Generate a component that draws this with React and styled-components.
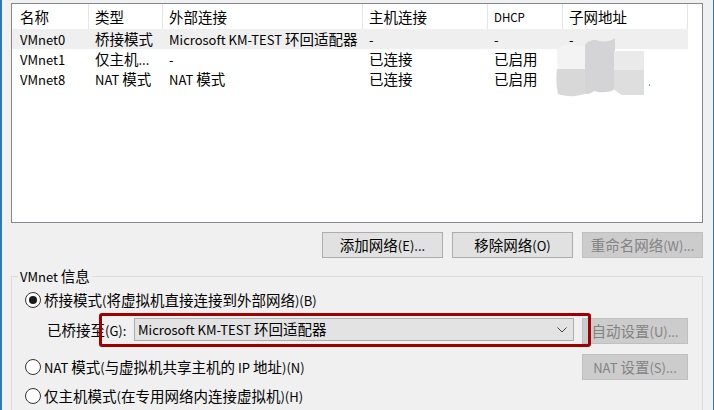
import styled, { createGlobalStyle } from "styled-components";

const GlobalStyle = createGlobalStyle`
  html, body {
    margin: 0;
    padding: 0;
    background: #f0f0f0;
  }
  body {
    font-family: "Noto Sans CJK SC", "Noto Sans", sans-serif;
  }
`;

// Latin runs are set smaller than the CJK glyphs, like Segoe UI next to YaHei
const Latin = styled.span`
  font-size: ${props => props.$size || 13}px;
`;

const T = ({ children, size }) => {
  const parts = String(children).split(/([\x20-\x7E]+)/);
  return parts.map((p, i) =>
    i % 2 === 1 ? <Latin key={i} $size={size}>{p}</Latin> : p
  );
};

const Window = styled.div`
  width: 714px;
  height: 410px;
  box-sizing: border-box;
  border-left: 2px solid #2b7bb9;
  border-right: 1px solid #2b7bb9;
  padding: 3px 10px 0 9px;
  background: #f0f0f0;
  overflow: hidden;
  font-size: 14.5px;
  color: #000;
`;

const ListBox = styled.div`
  position: relative;
  height: 220px;
  box-sizing: border-box;
  border: 1px solid #828790;
  background: #fff;
`;

const Row = styled.div`
  display: grid;
  grid-template-columns: 77px 74px 200px 125px 75px 125px;
  width: 676px;
  height: ${props => props.$header ? "25px" : "20px"};
  background: ${props => props.$selected ? "#efefef" : "transparent"};
`;

const Cell = styled.div`
  display: flex;
  align-items: center;
  padding-left: ${props => props.$first ? "8px" : "6px"};
  border-right: ${props => props.$header ? "1px solid #e5e5e5" : "none"};
  white-space: nowrap;
  overflow: hidden;
  line-height: 18px;
`;

const Blob = styled.svg`
  position: absolute;
  left: 544px;
  top: 33px;
`;

const ButtonBar = styled.div`
  display: flex;
  justify-content: flex-end;
  gap: 9px;
  margin-top: 9px;
`;

const Button = styled.button`
  width: ${props => props.$w}px;
  height: 26px;
  box-sizing: border-box;
  padding: 0;
  border: 1px solid ${props => props.disabled ? "#bfbfbf" : "#adadad"};
  background: ${props => props.disabled ? "#cccccc" : "#e1e1e1"};
  color: ${props => props.disabled ? "#838383" : "#000"};
  font: inherit;
  line-height: 18px;
  white-space: nowrap;
`;

const Group = styled.fieldset`
  margin: 9px 0 0 0;
  padding: 0 14px 40px 0;
  border: 1px solid #dcdcdc;
  min-width: 0;
`;

const Legend = styled.legend`
  margin-left: 6px;
  padding: 0 2px;
  line-height: 18px;
`;

const GroupBody = styled.div`
  display: flex;
  flex-direction: column;
  padding-top: 5px;
`;

const RadioRow = styled.div`
  display: flex;
  align-items: center;
  gap: 3px;
  height: ${props => props.$h || 18}px;
  margin-top: ${props => props.$mt || 0}px;
  padding-left: 13px;
`;

const RadioCircle = styled.span`
  width: 16px;
  height: 16px;
  box-sizing: border-box;
  border-radius: 50%;
  border: 1px solid #333;
  background: #fff;
  display: flex;
  align-items: center;
  justify-content: center;
  flex-shrink: 0;

  &::after {
    content: "";
    width: 8px;
    height: 8px;
    border-radius: 50%;
    background: #1a1a1a;
    display: ${props => props.$checked ? "block" : "none"};
  }
`;

const RadioLabel = styled.span`
  line-height: 18px;
  white-space: nowrap;
`;

const Spacer = styled.div`
  flex: 1;
`;

const BridgeRow = styled.div`
  position: relative;
  display: flex;
  align-items: flex-start;
  margin-top: 9px;
  padding-left: 35px;
`;

const BridgeLabel = styled.span`
  width: 87px;
  line-height: 23px;
  white-space: nowrap;
`;

const Combo = styled.div`
  width: 440px;
  height: 23px;
  box-sizing: border-box;
  border: 1px solid #adadad;
  background: #e3e3e3;
  display: flex;
  align-items: center;
  justify-content: space-between;
  padding: 0 6px 0 3px;
  line-height: 18px;
`;

const Highlight = styled.div`
  position: absolute;
  left: 87px;
  top: -5px;
  width: 492px;
  height: 34px;
  box-sizing: border-box;
  border: 3px solid #a00000;
  border-radius: 3px;
  pointer-events: none;
`;

const columns = ["名称", "类型", "外部连接", "主机连接", "DHCP", "子网地址"];

const networks = [
  ["VMnet0", "桥接模式", "Microsoft KM-TEST 环回适配器", "-", "-", "-"],
  ["VMnet1", "仅主机...", "-", "已连接", "已启用", ""],
  ["VMnet8", "NAT 模式", "NAT 模式", "已连接", "已启用", ""],
];

const App = () => {
  return (
    <>
      <GlobalStyle />
      <Window>
        <ListBox>
          <Row $header>
            {columns.map((c, i) => (
              <Cell key={c} $header $first={i === 0}>
                <span><T size={c === "DHCP" ? 11.5 : 13}>{c}</T></span>
              </Cell>
            ))}
          </Row>
          {networks.map((n, r) => (
            <Row key={n[0]} $selected={r === 0}>
              {n.map((v, i) => (
                <Cell key={i} $first={i === 0}><span><T>{v}</T></span></Cell>
              ))}
            </Row>
          ))}
          <Blob width="100" height="62" viewBox="0 0 100 62">
            <path d="M1 14 C4 8 12 6 20 9 C26 11 30 9 31 6 L31 54 C22 58 10 58 2 55 Z" fill="#f3f3f3" />
            <path d="M1 32 L31 32 L31 56 C22 60 10 60 2 57 C0 48 0 40 1 32 Z" fill="#d9d8d9" />
            <path d="M29 8 C32 3 38 2 44 4 C52 6 58 2 59 1 L59 52 C54 56 44 56 38 54 C34 57 30 58 29 56 Z" fill="#d4d3d5" />
            <path d="M58 14 L88 14 L88 58 L66 58 C62 56 60 54 58 52 Z" fill="#dedede" />
            <path d="M58 14 L88 14 L88 33 L58 33 Z" fill="#eaeaea" />
            <rect x="93" y="47" width="1" height="2" fill="#5b9bd5" />
          </Blob>
        </ListBox>

        <ButtonBar>
          <Button $w={121}><T>添加网络(E)...</T></Button>
          <Button $w={121}><T>移除网络(O)</T></Button>
          <Button $w={121} disabled><T>重命名网络(W)...</T></Button>
        </ButtonBar>

        <Group>
          <Legend><T>VMnet 信息</T></Legend>
          <GroupBody>
            <RadioRow>
              <RadioCircle $checked />
              <RadioLabel><T>桥接模式(将虚拟机直接连接到外部网络)(B)</T></RadioLabel>
            </RadioRow>

            <BridgeRow>
              <BridgeLabel><T>已桥接至(G):</T></BridgeLabel>
              <Combo>
                <span><T>Microsoft KM-TEST 环回适配器</T></span>
                <svg width="10" height="6" viewBox="0 0 10 6">
                  <path d="M0.5 0.5 L5 5 L9.5 0.5" fill="none" stroke="#444" strokeWidth="1" />
                </svg>
              </Combo>
              <Spacer />
              <Button $w={106} disabled><T>自动设置(U)...</T></Button>
              <Highlight />
            </BridgeRow>

            <RadioRow $h={26} $mt={10}>
              <RadioCircle />
              <RadioLabel><T>NAT 模式(与虚拟机共享主机的 IP 地址)(N)</T></RadioLabel>
              <Spacer />
              <Button $w={106} disabled><T>NAT 设置(S)...</T></Button>
            </RadioRow>

            <RadioRow $mt={7}>
              <RadioCircle />
              <RadioLabel><T>仅主机模式(在专用网络内连接虚拟机)(H)</T></RadioLabel>
            </RadioRow>
          </GroupBody>
        </Group>
      </Window>
    </>
  );
};

export default App;
